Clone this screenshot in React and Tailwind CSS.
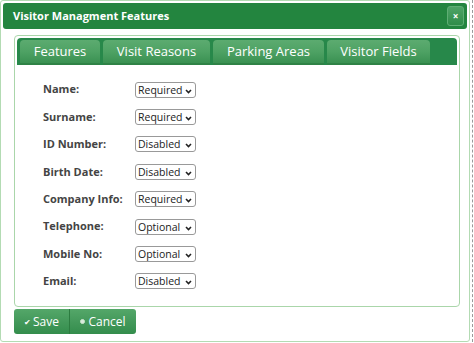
import React from 'react'

const fields = [
    ['Name:', 'Required'],
    ['Surname:', 'Required'],
    ['ID Number:', 'Disabled'],
    ['Birth Date:', 'Disabled'],
    ['Company Info:', 'Required'],
    ['Telephone:', 'Optional'],
    ['Mobile No:', 'Optional'],
    ['Email:', 'Disabled'],
]

const tabs = [
    ['Features', 'w-[80px]'],
    ['Visit Reasons', 'w-[107px]'],
    ['Parking Areas', 'w-[111px]'],
    ['Visitor Fields', 'w-[103px]'],
]

const Chevron = () => (
    <svg width="7" height="5" viewBox="0 0 7 5" className="absolute right-[3px] top-[6px]">
        <path d="M1 1 L3.5 3.5 L6 1" fill="none" stroke="#222" strokeWidth="1.6" />
    </svg>
)

const App = () => {
    return (
        <div className="w-[474px] h-[343px] bg-white relative" style={{ fontFamily: '"Open Sans", sans-serif' }}>
            <div className="w-[473px] h-[342px] border-r border-dashed border-r-[#9a9a9a]">
                <div className="w-[470px] h-[342px] border border-[#b3dbb3] rounded-[3px] p-[1px] flex flex-col">

                    {/* header */}
                    <div className="h-[26px] mt-[1px] mx-[1px] bg-[#23853f] rounded-[3px] flex items-center justify-between pl-[10px] pr-[3px]">
                        <span className="text-white text-[11px] font-bold">Visitor Managment Features</span>
                        <div className="w-[17px] h-[20px] rounded-[3px] border border-[#5fae74] bg-gradient-to-b from-[#4ea466] to-[#2f8c49] flex items-center justify-center">
                            <span className="text-white text-[10px] font-bold leading-none">×</span>
                        </div>
                    </div>

                    {/* tab panel */}
                    <div className="ml-[12px] mt-[6px] w-[446px] h-[272px] border border-[#aad6aa] rounded-[4px] p-[2px]">
                        <div className="h-[27px] bg-[#27884a] rounded-t-[4px] flex items-end gap-[3px] pl-[3px]">
                            {tabs.map(([t, w]) => (
                                <div key={t} className={`${w} h-[25px] rounded-t-[4px] bg-gradient-to-b from-[#5cab70] via-[#4ea264] to-[#3a9152] border-b-[2px] border-b-[#2f8246] flex items-center justify-center text-white text-[13px]`}>
                                    {t}
                                </div>
                            ))}
                        </div>

                        <div className="pl-[26px] pt-[11px]">
                            {fields.map(([label, value]) => (
                                <div key={label} className="h-[27.4px] flex items-center">
                                    <span className="w-[92px] text-[11px] font-bold text-[#444]">{label}</span>
                                    <div className="relative w-[61px] h-[16px] border border-[#999] rounded-[3px] bg-white">
                                        <span className="absolute left-[2px] top-[-1px] text-[10.5px] leading-[16px] text-[#222]">{value}</span>
                                        <Chevron />
                                    </div>
                                </div>
                            ))}
                        </div>
                    </div>

                    {/* buttons */}
                    <div className="ml-[12px] mt-[2px] flex">
                        <div className="w-[56px] h-[25px] rounded-l-[3px] bg-gradient-to-b from-[#54a769] via-[#44995b] to-[#338d4c] border-r border-r-[#2c7c40] flex items-center justify-center text-white text-[12px] gap-[2px]">
                            <span className="text-[8px]">✔</span>Save
                        </div>
                        <div className="w-[66px] h-[25px] rounded-r-[3px] bg-gradient-to-b from-[#54a769] via-[#44995b] to-[#338d4c] flex items-center justify-center text-white text-[12px] gap-[3px]">
                            <span className="w-[5px] h-[5px] rounded-full bg-white/80 border border-[#cfe8cf]"></span>Cancel
                        </div>
                    </div>
                </div>
            </div>
        </div>
    )
}

export default App
